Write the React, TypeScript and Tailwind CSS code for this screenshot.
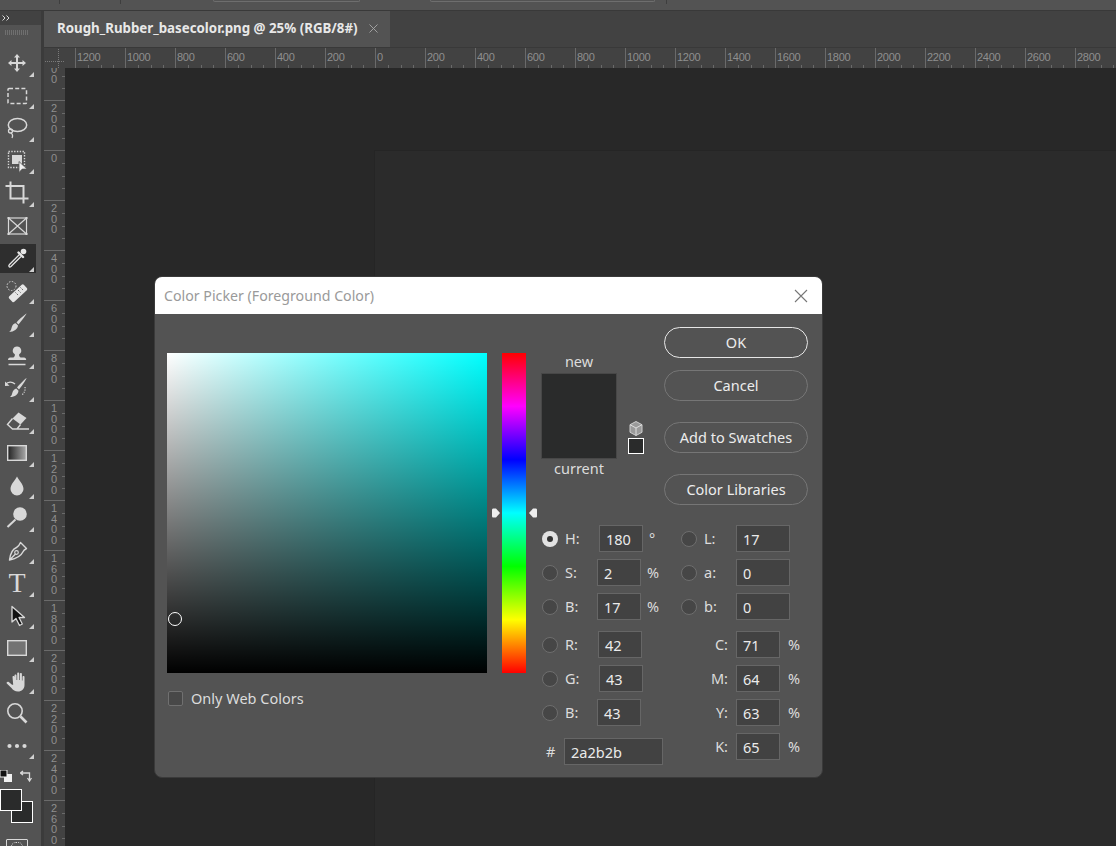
import React from 'react';

const ui = '[font-family:"Noto_Sans",sans-serif]';
const ink = '#d8d8d8';

const Svg = ({ children }: { children: React.ReactNode }) => (
	<svg width="24" height="24" viewBox="0 0 24 24" fill="none">
		{children}
	</svg>
);

const icons: React.ReactNode[] = [
	// move
	<Svg key="move">
		<path fill={ink} d="M12 3l3 3.5h-2V11h4.5V9l3.5 3-3.5 3v-2H13v4.5h2L12 21l-3-3.5h2V13H6.5v2L3 12l3.5-3v2H11V6.5H9z" />
	</Svg>,
	// marquee
	<Svg key="marquee">
		<rect x="3" y="4.5" width="18.5" height="15" rx="1" stroke={ink} strokeWidth="1.5" strokeDasharray="4 2.2" />
	</Svg>,
	// lasso
	<Svg key="lasso">
		<ellipse cx="12.5" cy="9" rx="9.2" ry="6.6" stroke={ink} strokeWidth="1.5" />
		<circle cx="5.5" cy="15" r="2" stroke={ink} strokeWidth="1.3" />
		<path d="M6 17c2 1.5 2 3 1 5" stroke={ink} strokeWidth="1.3" />
	</Svg>,
	// object select
	<Svg key="object">
		<rect x="3.5" y="2.5" width="16" height="16" stroke={ink} strokeWidth="1.4" strokeDasharray="1.4 1.4" />
		<rect x="7" y="6" width="10" height="9" fill={ink} />
		<path d="M14 12.5v11l3.2-3.4H22z" fill="#f0f0f0" stroke="#535353" strokeWidth="0.8" />
	</Svg>,
	// crop
	<Svg key="crop">
		<path d="M0.5 5H18.5V22.5M5.5 0.5V17.5H23.5" stroke={ink} strokeWidth="2" />
	</Svg>,
	// frame
	<Svg key="frame">
		<rect x="3.5" y="4" width="18" height="16" stroke={ink} strokeWidth="1.2" />
		<path d="M3.5 4l18 16M21.5 4l-18 16" stroke={ink} strokeWidth="1.2" />
		<path fill={ink} d="M2.5 3h2v2h-2zM20.5 3h2v2h-2zM2.5 19h2v2h-2zM20.5 19h2v2h-2z" />
	</Svg>,
	// eyedropper
	<Svg key="dropper">
		<path d="M13.5 6.5l4.5 4.5" stroke="#e6e6e6" strokeWidth="2.4" strokeLinecap="round" />
		<circle cx="18.5" cy="5.5" r="2.8" fill="#e6e6e6" />
		<path d="M14.5 8.5L4.5 18.5c-1.5 1.7-.2 3.3 1.5 2l10-10" stroke="#e6e6e6" strokeWidth="1.3" />
	</Svg>,
	// healing brush
	<Svg key="heal">
		<ellipse cx="6.5" cy="7" rx="4.5" ry="4.5" stroke={ink} strokeWidth="1" strokeDasharray="1.5 1.5" />
		<rect x="3" y="10.5" width="20" height="7.5" rx="1.5" transform="rotate(-43 13 14.2)" fill="#e6e6e6" />
		<path d="M10.5 13.5l3 3M13 11l3 3M15.5 8.5l3 3" stroke="#535353" strokeWidth="1" strokeDasharray="1.2 1.2" />
	</Svg>,
	// brush
	<Svg key="brush">
		<path fill={ink} d="M21.5 2.5c.5 0-5 7.5-8 11l-2-2c3-3.5 9.5-9 10-9zM10.8 12.3l2.2 2.2c-.2 3.5-4 6.3-9 6.5 2.5-1.5 2-3 3-5.5.6-1.6 2-3 3.8-3.2z" />
	</Svg>,
	// stamp
	<Svg key="stamp">
		<path fill={ink} d="M12 2.5a4.2 4.2 0 012.2 7.8c-.3 1.5.3 2.5 1.3 3.2h3.5c1.3 0 2.2 1 2.2 2.5H3c0-1.5.9-2.5 2.2-2.5h3.3c1-.7 1.6-1.7 1.3-3.2A4.2 4.2 0 0112 2.5z" />
		<path d="M3.5 20.5h17" stroke={ink} strokeWidth="1.5" />
	</Svg>,
	// history brush
	<Svg key="history">
		<path fill={ink} d="M21.5 2c.6 0-4 7.5-7.5 11.5l-2-2c3-3.5 9-9.5 9.5-9.5zM11.3 12.5l2.2 2.2c-.2 3.5-3.5 6.3-8.5 6.3 2.3-1.5 1.8-3 2.7-5.2.6-1.6 1.9-3 3.6-3.3z" />
		<path d="M0.5 8.5C3 5.5 7 5.5 10 8" stroke={ink} strokeWidth="1.3" />
		<path fill={ink} d="M0 5.5l4.5 4.2L-.2 10z" />
		<path d="M20 11c.5 3-.5 5.5-3 8" stroke={ink} strokeWidth="1.2" strokeDasharray="1.2 1.2" />
	</Svg>,
	// eraser
	<Svg key="eraser">
		<path fill={ink} d="M13.5 3.5l8 5.5-6 6.5-8-6z" />
		<path d="M7.5 9.5L2.5 15.5l5 4.5h4.5l3.5-4.5M7 20h17" stroke={ink} strokeWidth="1.4" />
	</Svg>,
	// gradient
	<Svg key="gradient">
		<defs>
			<linearGradient id="grad" x1="0" x2="1" y1="0" y2="0">
				<stop offset="0" stopColor="#222222" />
				<stop offset="1" stopColor="#aaaaaa" />
			</linearGradient>
		</defs>
		<rect x="2.7" y="4.7" width="18.6" height="14.6" fill="url(#grad)" stroke={ink} strokeWidth="1.4" />
	</Svg>,
	// blur drop
	<Svg key="drop">
		<path fill={ink} d="M12 2.5c1.5 3.5 6.5 7.5 6.5 12.5a6.5 6.5 0 01-13 0C5.5 10 10.5 6 12 2.5z" />
	</Svg>,
	// dodge
	<Svg key="dodge">
		<circle cx="15" cy="8" r="6.8" fill={ink} />
		<path d="M10.5 13.5L2.5 21" stroke={ink} strokeWidth="2" />
	</Svg>,
	// pen
	<Svg key="pen">
		<path d="M15.5 3.5l6 6c-2 1-3 2-4 4-.8 2-4.5 5.5-13 7.5 1-8 4.5-11.5 7-12.5 2-1 3-2.5 4-5zM4.5 21l6-6" stroke={ink} strokeWidth="1.4" strokeLinejoin="round" />
		<circle cx="11.5" cy="13.5" r="1.8" stroke={ink} strokeWidth="1.2" />
	</Svg>,
	// type, real text
	<span key="type" className='[font-family:"Liberation_Serif",serif] text-[28px] leading-[24px] text-[#d8d8d8]'>
		T
	</span>,
	// path select
	<Svg key="path">
		<path d="M7 2.5v15.5l4-3.5 3.5 7 2.8-1.5-3.3-6.5h5.5z" fill="#111111" stroke={ink} strokeWidth="1.3" strokeLinejoin="round" />
	</Svg>,
	// rectangle
	<Svg key="rect">
		<rect x="2.7" y="4.7" width="18.6" height="14.6" fill="#737373" stroke={ink} strokeWidth="1.4" />
	</Svg>,
	// hand
	<Svg key="hand">
		<path fill={ink} d="M9.5 6.5c0-1.3 2-1.3 2 0V11h.7V4.5c0-1.3 2-1.3 2 0V11h.7V5c0-1.3 2-1.3 2 0v6.5h.6V8c0-1.3 2-1.3 2 0v8c0 4-2.8 6.5-6.5 6.5-3 0-5-1.3-6.5-3.5L1.8 14.5c-.8-1.2.8-2.5 2-1.500l3.200 2.800h1.200l-.7-7.800c-.1-1.300 1.800-1.500 2 0z" />
	</Svg>,
	// zoom
	<Svg key="zoom">
		<circle cx="10" cy="10" r="7.2" stroke={ink} strokeWidth="1.6" />
		<path d="M15.5 15.5l6 6" stroke={ink} strokeWidth="2.6" />
	</Svg>,
	// more
	<Svg key="more">
		<circle cx="4.5" cy="12" r="2.1" fill={ink} />
		<circle cx="12" cy="12" r="2.1" fill={ink} />
		<circle cx="19.5" cy="12" r="2.1" fill={ink} />
	</Svg>,
];

const withMenu = [true, true, true, true, true, false, true, true, true, true, true, true, true, true, true, true, true, true, true, true, false, true];

const Toolbar = () => (
	<div className="flex w-[41px] shrink-0 flex-col overflow-hidden bg-[#535353]">
		<div className="flex h-[14px] shrink-0 items-center bg-[#424242] pl-[2px]">
			<svg width="8" height="6" viewBox="0 0 8 6" fill="none">
				<path d="M0.5 0.5L3 3 .5 5.5M4.5 .5L7 3 4.500 5.500" stroke="#d8d8d8" />
			</svg>
		</div>
		<div className="h-[22px] shrink-0 pl-[5px] pt-[5px]">
			<div className="h-[5px] w-[24px] bg-[repeating-linear-gradient(to_right,#6f6f6f_0,#6f6f6f_1px,transparent_1px,transparent_2px)]" />
		</div>
		{icons.map((icon, i) => (
			<div key={i} className="relative flex h-[32.5px] shrink-0 items-center">
				<div className={`flex h-[29px] w-[36px] items-center justify-center ${i === 6 ? 'bg-[#2e2e2e]' : ''}`}>
					<div className="flex h-[24px] w-[24px] -translate-x-px items-center justify-center">{icon}</div>
				</div>
				{withMenu[i] && (
					<div className="absolute bottom-[3px] left-[29px] h-0 w-0 border-b-[5px] border-l-[5px] border-b-[#cfcfcf] border-l-transparent" />
				)}
			</div>
		))}
		<div className="flex h-[27px] shrink-0 items-start justify-between pr-[8px] pt-[8px]">
			<svg width="12" height="12" viewBox="0 0 12 12">
				<rect x="4" y="4" width="8" height="8" fill="#f0f0f0" />
				<rect x="0" y="0" width="7" height="7" fill="#111111" stroke="#f0f0f0" />
			</svg>
			<svg width="13" height="13" viewBox="0 0 13 13" fill="none">
				<path d="M3 1L.5 3 3 5M.5 3h9v7M7.5 8l2 3 2-3" stroke="#d8d8d8" strokeWidth="1.3" />
			</svg>
		</div>
		<div className="h-[34px] shrink-0">
			<div className="relative z-10 h-[22px] w-[22px] border border-white bg-[#2a2b2b]" />
			<div className="-mt-[10px] ml-[11px] h-[22px] w-[22px] border border-white bg-[#2a2b2b]" />
		</div>
		<div className="ml-[6px] mt-[16px] flex h-[10px] w-[22px] shrink-0 justify-center rounded-t-[1px] border border-[#d8d8d8] pt-[2px]">
			<div className="h-[10px] w-[12px] rounded-full border border-dotted border-[#d8d8d8]" />
		</div>
	</div>
);

const hLabels = ['', '1200', '1000', '800', '600', '400', '200', '0', '200', '400', '600', '800', '1000', '1200', '1400', '1600', '1800', '2000', '2200', '2400', '2600', '2800'];
const vLabels = [400, 200, 0, 200, 400, 600, 800, 1000, 1200, 1400, 1600, 1800, 2000, 2200, 2400, 2600];

const HRuler = () => (
	<div className="flex h-[21px] shrink-0 border-t border-[#393939] bg-[#424242]">
		<div className="w-[21px] shrink-0">
			<svg width="21" height="20" viewBox="0 0 21 20">
				<path d="M1 13.5H21M14.5 1V20" stroke="#7a7a7a" strokeDasharray="1 1" />
			</svg>
		</div>
		<div className="flex-1 overflow-hidden">
			<div className="-ml-[40px] flex h-full w-[1200px]">
				{hLabels.map((n, i) => (
					<div key={i} className="flex h-full w-[50px] shrink-0 flex-col justify-between border-l border-[#6a6a6a]">
						<span className="h-[12px] pl-[1px] pt-[3px] text-[11px] leading-[12px] tracking-[-0.3px] text-[#8f8f8f] [font-family:'Liberation_Sans',sans-serif]">
							{n}
						</span>
						<div className="flex h-[3px]">
							<div className="w-[12px]" />
							<div className="w-[12.5px] border-l border-[#6a6a6a]" />
							<div className="w-[12.5px] border-l border-[#6a6a6a]" />
							<div className="w-[12px] border-l border-[#6a6a6a]" />
						</div>
					</div>
				))}
			</div>
		</div>
	</div>
);

const VRuler = () => (
	<div className="h-full w-[21px] shrink-0 overflow-hidden bg-[#424242]">
		<div className="-mt-[18px]">
			{vLabels.map((n, i) => (
				<div key={i} className="flex h-[50px] justify-between border-t border-[#6a6a6a] pl-[7px]">
					<div className="flex flex-col pt-[2px] text-[11px] leading-[10.7px] text-[#8f8f8f] [font-family:'Liberation_Sans',sans-serif]">
						{String(n)
							.split('')
							.map((d, j) => (
								<span key={j}>{d}</span>
							))}
					</div>
					<div className="flex w-[3px] flex-col">
						<div className="h-[12px]" />
						<div className="h-[12.5px] border-t border-[#6a6a6a]" />
						<div className="h-[12.5px] border-t border-[#6a6a6a]" />
						<div className="h-[12px] border-t border-[#6a6a6a]" />
					</div>
				</div>
			))}
		</div>
	</div>
);

const Radio = ({ on }: { on?: boolean }) =>
	on ? (
		<div className="ml-[1px] flex h-[16px] w-[16px] shrink-0 items-center justify-center rounded-full bg-[#e2e2e2]">
			<div className="h-[6px] w-[6px] rounded-full bg-[#333333]" />
		</div>
	) : (
		<div className="ml-[1px] h-[16px] w-[16px] shrink-0 rounded-full border border-[#6e6e6e] bg-[#464646]" />
	);

const Field = ({ value, className = 'w-[44px]' }: { value: string; className?: string }) => (
	<div className={`flex h-[27px] shrink-0 items-center border border-[#666666] bg-[#424242] pl-[6px] pt-[2px] text-[14.5px] text-[#ebebeb] ${className}`}>
		{value}
	</div>
);

const Row = ({
	label,
	value,
	unit,
	on,
	fieldClass,
	className = '',
}: {
	label: string;
	value: string;
	unit?: string;
	on?: boolean;
	fieldClass?: string;
	className?: string;
}) => (
	<div className={`flex h-[27px] items-center text-[14.5px] text-[#dcdcdc] ${className}`}>
		<Radio on={on} />
		<span className="ml-[7px] w-[32px] shrink-0">{label}</span>
		<Field value={value} className={fieldClass} />
		{unit && <span className="ml-[6px]">{unit}</span>}
	</div>
);

const CmykRow = ({ label, value, className = '' }: { label: string; value: string; className?: string }) => (
	<div className={`flex h-[27px] items-center text-[14.5px] text-[#dcdcdc] ${className}`}>
		<span className="mr-[8px] w-[48px] shrink-0 text-right">{label}</span>
		<Field value={value} />
		<span className="ml-[8px]">%</span>
	</div>
);

const PillButton = ({ label, primary, className = '' }: { label: string; primary?: boolean; className?: string }) => (
	<div
		className={`flex h-[31px] w-[144px] items-center justify-center rounded-full border text-[14.5px] text-[#ececec] ${primary ? 'border-[#e6e6e6]' : 'border-[#767676]'} ${className}`}
	>
		{label}
	</div>
);

const ColorPicker = () => (
	<div className={`absolute left-[154px] top-[276px] w-[669px] overflow-hidden rounded-[8px] border border-[#3a3a3a] bg-[#535353] ${ui}`}>
		<div className="flex h-[37px] items-center justify-between bg-white pl-[9px] pr-[14px]">
			<span className="text-[14.2px] text-[#9a9a9a]">Color Picker (Foreground Color)</span>
			<svg width="14" height="14" viewBox="0 0 14 14" fill="none">
				<path d="M1 1l12 12M13 1L1 13" stroke="#777777" strokeWidth="1.1" />
			</svg>
		</div>
		<div className="flex h-[463px] items-start pl-[12px]">
			<div className="mt-[39px] w-[320px] shrink-0">
				<div className="relative h-[320px] w-[320px] bg-[linear-gradient(to_bottom,transparent,black),linear-gradient(to_right,white,#00ffff)]">
					<div className="absolute left-[1px] top-[259px] h-[14px] w-[14px] rounded-full border border-white" />
				</div>
				<div className="mt-[15px] flex items-center text-[14.5px] text-[#dcdcdc]">
					<div className="ml-[1px] h-[15px] w-[15px] rounded-[2px] border border-[#707070] bg-[#484848]" />
					<span className="ml-[8px]">Only Web Colors</span>
				</div>
			</div>
			<div className="relative ml-[15px] mt-[39px] h-[320px] w-[24px] shrink-0 bg-[linear-gradient(to_bottom,#ff0000,#ff00ff,#0000ff,#00ffff,#00ff00,#ffff00,#ff0000)]">
				<svg className="absolute -left-[11px] top-[155px]" width="10" height="10" viewBox="0 0 10 10">
					<path d="M1 2c0-1 .5-1.5 1.5-1.5H5L9 5 5 9.5H2.5C1.5 9.5 1 9 1 8z" fill="#eeeeee" />
				</svg>
				<svg className="absolute -right-[12px] top-[155px]" width="10" height="10" viewBox="0 0 10 10">
					<path d="M9 2c0-1-.5-1.5-1.5-1.5H5L1 5l4 4.500h2.500C8.500 9.500 9 9 9 8z" fill="#eeeeee" />
				</svg>
			</div>
			<div className="ml-[15px] mt-[14px] w-[270px] shrink-0">
				<div className="flex">
					<div className="flex w-[123px] shrink-0 flex-col">
						<div className="flex h-[45px] w-[76px] items-end justify-center pb-[2px] text-[14.5px] leading-[20px] text-[#dcdcdc]">new</div>
						<div className="flex">
							<div className="h-[86px] w-[76px] border border-[#474747] bg-[#2a2b2b]" />
							<div className="ml-[11px] flex flex-col items-center pt-[47px]">
								<svg width="16" height="17" viewBox="0 0 16 17" fill="none">
									<path d="M8 1.5l6 3.200v7.600L8 15.500l-6-3.200V4.700z" fill="#9a9a9a" stroke="#cfcfcf" strokeWidth="1" />
									<path d="M2 4.700L8 8l6-3.300M8 8v7.500" stroke="#dddddd" strokeWidth="1" />
								</svg>
								<div className="mt-[1px] h-[16px] w-[16px] border border-white bg-[#2a2b2b]" />
							</div>
						</div>
						<div className="-mt-[1px] flex w-[76px] justify-center text-[14.5px] leading-[20px] text-[#dcdcdc]">current</div>
					</div>
					<div className="-mt-[1px] flex flex-col">
						<PillButton label="OK" primary />
						<PillButton label="Cancel" className="mt-[12px]" />
						<PillButton label="Add to Swatches" className="mt-[21px]" />
						<PillButton label="Color Libraries" className="mt-[21px]" />
					</div>
				</div>
				<div className="mt-[20px] flex">
					<div className="flex w-[139px] shrink-0 flex-col gap-[7px]">
						<Row label="H:" value="180" unit="°" on fieldClass="ml-[2px] w-[44px]" />
						<Row label="S:" value="2" unit="%" fieldClass="w-[44px]" />
						<Row label="B:" value="17" unit="%" fieldClass="w-[44px]" />
						<Row label="R:" value="42" fieldClass="ml-[1px] w-[44px]" className="mt-[4px]" />
						<Row label="G:" value="43" fieldClass="ml-[2px] w-[44px]" />
						<Row label="B:" value="43" fieldClass="w-[44px]" />
						<div className="mt-[5px] flex h-[27px] items-center text-[14.5px] text-[#dcdcdc]">
							<span className="w-[23px] pl-[5px]">#</span>
							<Field value="2a2b2b" className="w-[99px]" />
						</div>
					</div>
					<div className="flex flex-col gap-[7px]">
						<Row label="L:" value="17" fieldClass="w-[54px]" />
						<Row label="a:" value="0" fieldClass="w-[54px]" />
						<Row label="b:" value="0" fieldClass="w-[54px]" />
						<CmykRow label="C:" value="71" className="mt-[4px]" />
						<CmykRow label="M:" value="64" />
						<CmykRow label="Y:" value="63" />
						<CmykRow label="K:" value="65" />
					</div>
				</div>
			</div>
		</div>
	</div>
);

const App = () => {
	return (
		<div className="relative flex h-[846px] w-[1116px] flex-col overflow-hidden bg-[#3b3b3b]">
			<div className="flex h-[11px] shrink-0 border-b border-[#393939] bg-[#535353]">
				<div className="h-[4px] w-[60px] border-r border-[#3e3e3e]" />
				<div className="h-[4px] w-[61px] border-r border-[#3e3e3e]" />
				<div className="ml-[92px] h-[2px] w-[147px] rounded-b-[3px] border border-t-0 border-[#6e6e6e]" />
				<div className="ml-[70px] h-[2px] w-[225px] rounded-b-[3px] border border-t-0 border-[#6e6e6e]" />
				<div className="ml-[11px] h-[4px] w-px bg-[#3e3e3e]" />
			</div>
			<div className="flex min-h-0 flex-1">
				<Toolbar />
				<div className="ml-[3px] flex min-w-0 flex-1 flex-col">
					<div className="flex h-[36px] shrink-0 bg-[#424242]">
						<div className="flex h-full w-[346px] items-center justify-between bg-[#535353] pb-[1px] pl-[13px] pr-[12px]">
							<span className="text-[13.3px] font-bold text-[#e8e8e8] [font-family:'Noto_Sans',sans-serif]">
								Rough_Rubber_basecolor.png @ 25% (RGB/8#)
							</span>
							<svg width="9" height="9" viewBox="0 0 9 9" fill="none">
								<path d="M.5.5l8 8M8.5.5l-8 8" stroke="#a8a8a8" strokeWidth="0.9" />
							</svg>
						</div>
					</div>
					<HRuler />
					<div className="flex min-h-0 flex-1">
						<VRuler />
						<div className="min-w-0 flex-1 bg-[#282828] pl-[309px] pt-[82px]">
							<div className="h-full w-full border-l border-t border-[#252525] bg-[#2b2b2b]" />
						</div>
					</div>
				</div>
			</div>
			<ColorPicker />
		</div>
	);
};

export default App;
